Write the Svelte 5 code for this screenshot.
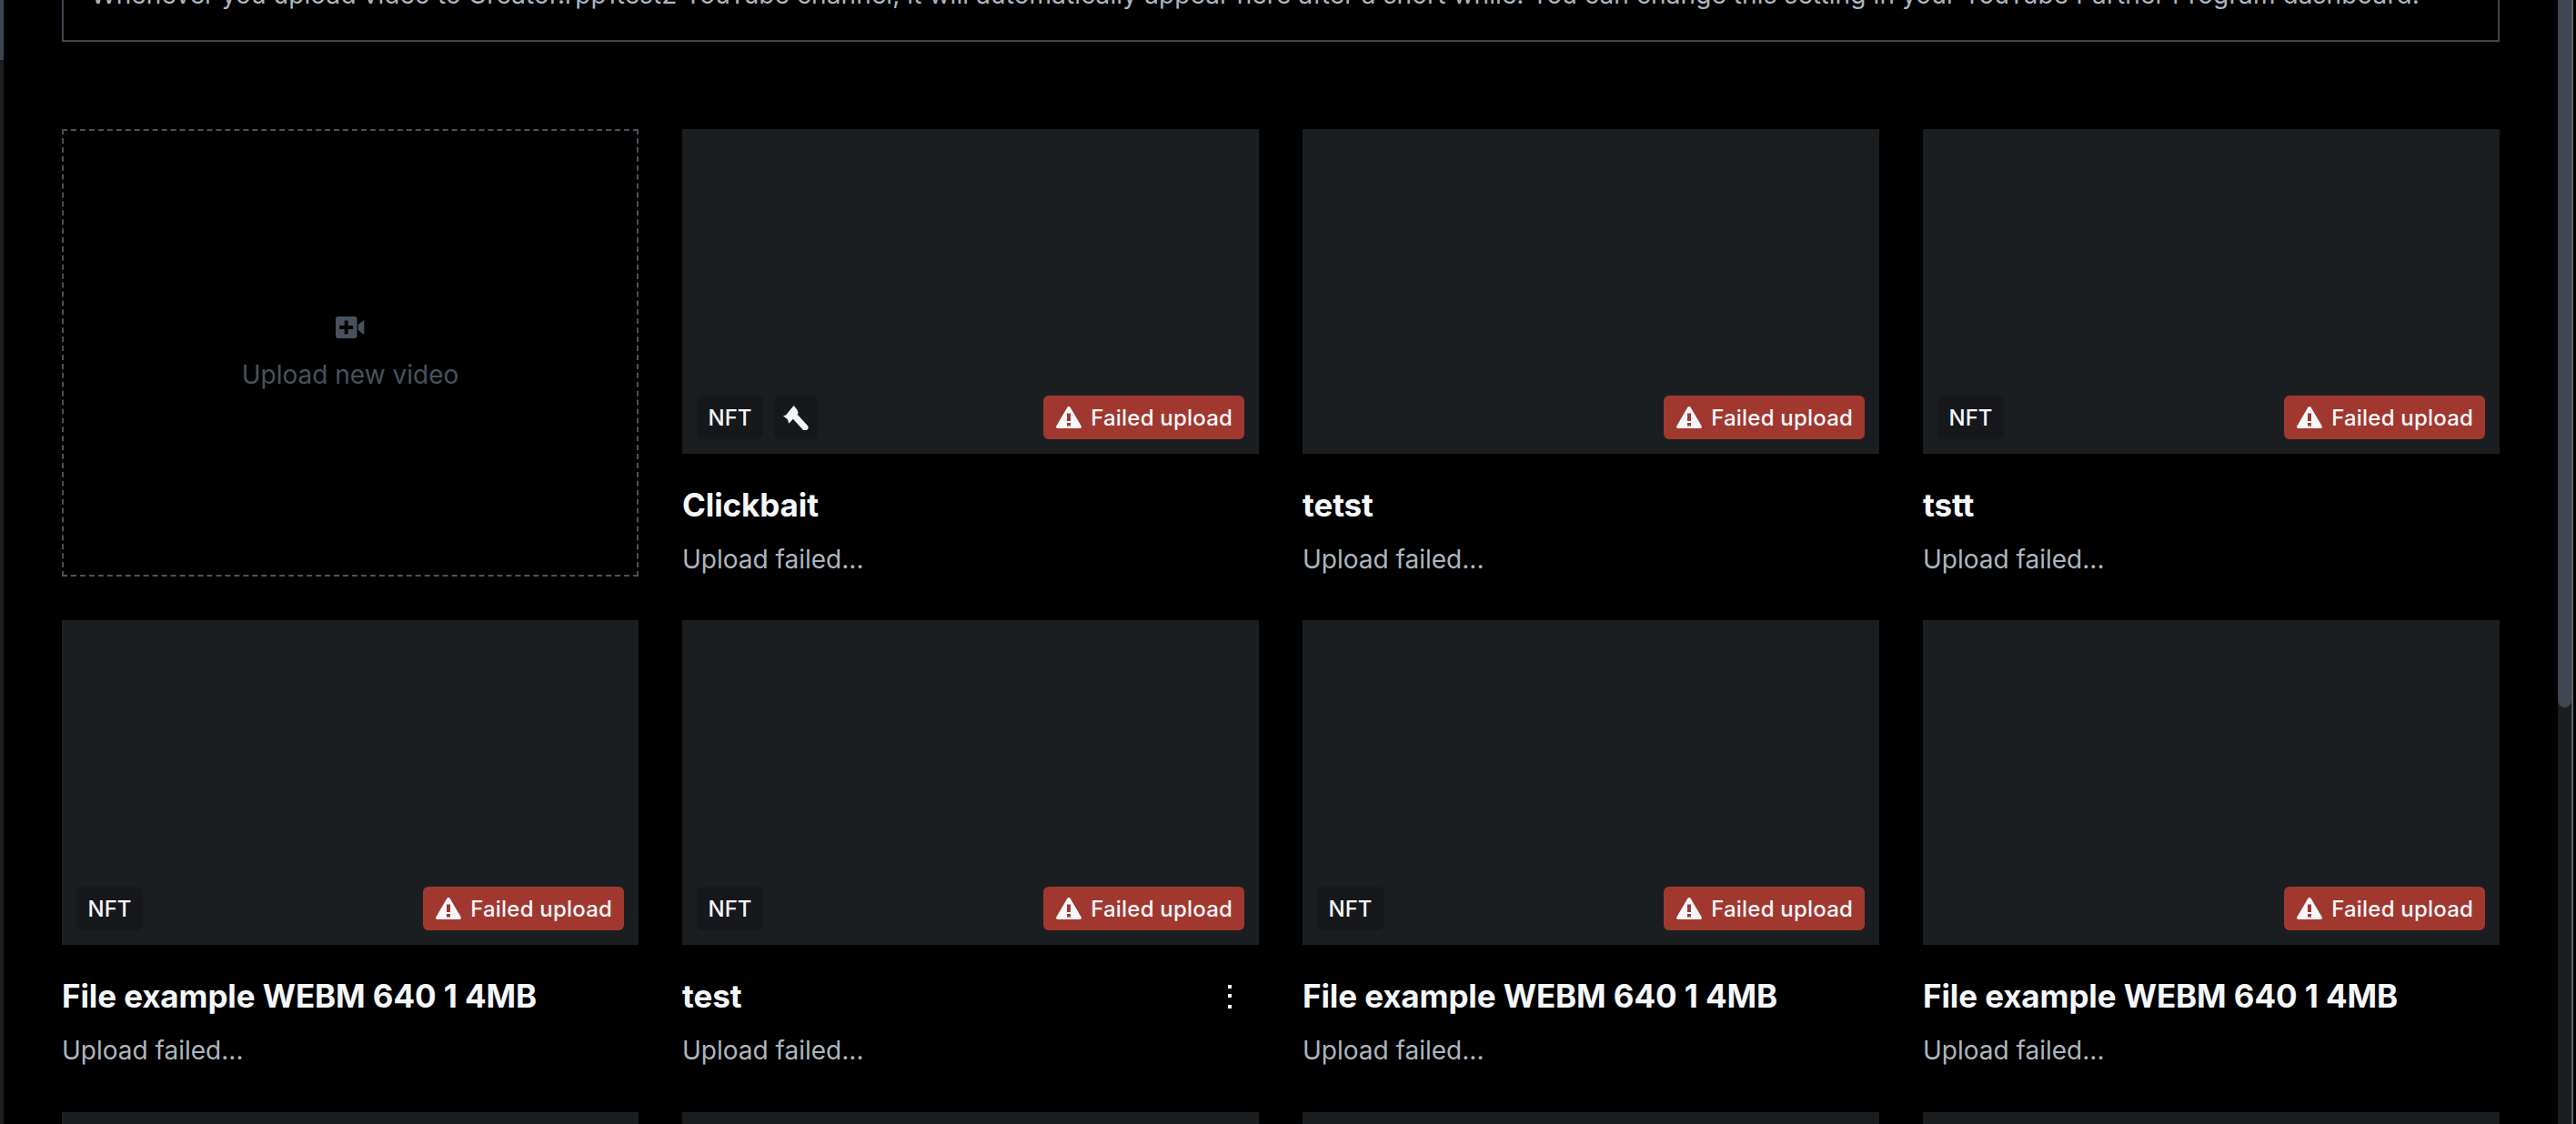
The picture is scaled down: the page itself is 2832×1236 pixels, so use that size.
<script>
    const videos = [
        { title: "Clickbait", nft: true, auction: true },
        { title: "tetst" },
        { title: "tstt", nft: true },
        { title: "File example WEBM 640 1 4MB", nft: true },
        { title: "test", nft: true, menu: true },
        { title: "File example WEBM 640 1 4MB", nft: true },
        { title: "File example WEBM 640 1 4MB" }
    ];
</script>

<div class="page">
    <div class="side-scroll"><div class="side-thumb"></div></div>

    <main class="content">
        <div class="notice">
            Whenever you upload video to Creator.rpp1test2 YouTube channel, it will automatically appear here after a short while. You can change this setting in your YouTube Partner Program dashboard.
        </div>

        <div class="grid">
            <button class="upload">
                <svg class="upload-icon" viewBox="0 0 32 24" width="32" height="24" aria-hidden="true">
                    <path fill-rule="evenodd" d="M3 0h17.5a3 3 0 0 1 3 3v18a3 3 0 0 1-3 3H3a3 3 0 0 1-3-3V3a3 3 0 0 1 3-3zM9.7 4.5v5.5H4.2v4h5.5v5.5h4V14h5.500v-4h-5.500V4.500z" />
                    <path d="M24.7 9 31.3 3.7v16.4L24.7 15z" />
                </svg>
                <span>Upload new video</span>
            </button>

            {#each videos as video}
                <article class="card">
                    <div class="thumb">
                        <div class="tags">
                            {#if video.nft}
                                <span class="tag">NFT</span>
                            {/if}
                            {#if video.auction}
                                <span class="tag square">
                                    <svg viewBox="0 0 28 28" width="28" height="28" aria-hidden="true">
                                        <path fill="currentColor" d="M0 12.2 3 11.4 9.5 3.6 11.7 1l3.6 4.5 1.4 3.8-10.4 11.4-1.4-4.4z" />
                                        <path d="M13.5 13.5 24 25" stroke="currentColor" stroke-width="7" stroke-linecap="round" fill="none" />
                                    </svg>
                                </span>
                            {/if}
                        </div>
                        <span class="failed">
                            <svg viewBox="0 0 28 24" width="28" height="24" aria-hidden="true">
                                <path fill="currentColor" fill-rule="evenodd" d="M14 0c.7 0 1.3.4 1.7 1l12 20.6c.7 1.2-.2 2.4-1.6 2.4H1.9C.5 24-.4 22.800.3 21.600L12.300 1c.4-.6 1-1 1.700-1zM12 7.500v8.500h4V7.500zM12 18v3.500h4V18z" />
                            </svg>
                            Failed upload
                        </span>
                    </div>
                    <div class="meta">
                        <div class="title-row">
                            <h3>{video.title}</h3>
                            {#if video.menu}
                                <svg class="menu" viewBox="0 0 6 28" width="6" height="28" fill="currentColor" aria-hidden="true">
                                    <rect x="1" y="2" width="4" height="4" />
                                    <rect x="1" y="12" width="4" height="4" />
                                    <rect x="1" y="24" width="4" height="4" />
                                </svg>
                            {/if}
                        </div>
                        <p>Upload failed...</p>
                    </div>
                </article>
            {/each}

            {#each [1, 2, 3, 4] as n (n)}
                <div class="thumb"></div>
            {/each}
        </div>
    </main>

    <div class="main-scroll">
        <div class="main-track"><div class="main-thumb"></div></div>
        <div class="main-edge"></div>
    </div>
</div>

<style>
    :global(body) {
        margin: 0;
        background: #000;
    }

    .page {
        display: flex;
        height: 1236px;
        overflow: hidden;
        background: #000;
        font-family: Inter, "Liberation Sans", sans-serif;
        color: #f5f7fa;
    }

    .side-scroll {
        width: 4px;
        flex: none;
        background: #1b1e21;
    }

    .side-thumb {
        height: 66px;
        background: #3f4650;
    }

    .content {
        flex: 1;
        min-width: 0;
        padding: 0 64px;
    }

    /* the page is scrolled, the top of this box is out of view */
    .notice {
        margin-top: -26px;
        padding: 0 30px 30px;
        border: 2px solid #3f4650;
        border-top: 0;
        font-size: 28px;
        line-height: 40px;
        letter-spacing: 0.11px;
        color: #adb6bf;
        white-space: nowrap;
    }

    .grid {
        display: grid;
        grid-template-columns: repeat(4, 634px);
        gap: 48px;
        margin-top: 96px;
    }

    .upload {
        display: flex;
        flex-direction: column;
        align-items: center;
        justify-content: center;
        gap: 20px;
        box-sizing: border-box;
        height: 492.3px;
        padding: 3px 0 0;
        background: none;
        border: 2px dashed #48525c;
        font: inherit;
        font-size: 28px;
        line-height: 40px;
        color: #48525c;
    }

    .upload-icon {
        fill: #48525c;
    }

    .card {
        height: 492.3px;
    }

    .thumb {
        position: relative;
        display: flex;
        justify-content: space-between;
        align-items: flex-end;
        box-sizing: border-box;
        height: 357px;
        padding: 16px;
        background: #1b1e21;
    }

    .tags {
        display: flex;
        gap: 12px;
    }

    .tag {
        display: flex;
        align-items: center;
        justify-content: center;
        box-sizing: border-box;
        height: 48px;
        padding: 0 12.5px;
        border-radius: 6px;
        background: #16181b;
        font-size: 24px;
        font-weight: 500;
    }

    .tag.square {
        width: 48px;
        padding: 0;
    }

    .failed {
        display: flex;
        align-items: center;
        gap: 10px;
        box-sizing: border-box;
        height: 48px;
        padding: 0 13px 0 14px;
        border-radius: 6px;
        background: #a1382f;
        font-size: 24px;
        font-weight: 500;
        letter-spacing: 0.2px;
        white-space: nowrap;
    }

    .meta {
        padding-top: 32px;
    }

    .title-row {
        display: flex;
        align-items: center;
        justify-content: space-between;
        padding-right: 29px;
    }

    h3 {
        margin: 0;
        font-size: 35px;
        line-height: 48px;
        font-weight: 700;
        letter-spacing: -0.1px;
    }

    .menu {
        color: #f5f7fa;
    }

    p {
        margin: 16px 0 0;
        font-size: 28px;
        line-height: 40px;
        color: #adb6bf;
    }

    .main-scroll {
        display: flex;
        flex: none;
        width: 20px;
    }

    .main-track {
        width: 15px;
        background: #1b1e21;
    }

    .main-thumb {
        height: 778px;
        border-radius: 0 0 8px 8px;
        background: #3f4650;
    }

    .main-edge {
        width: 2px;
        background: #5c6167;
    }
</style>
